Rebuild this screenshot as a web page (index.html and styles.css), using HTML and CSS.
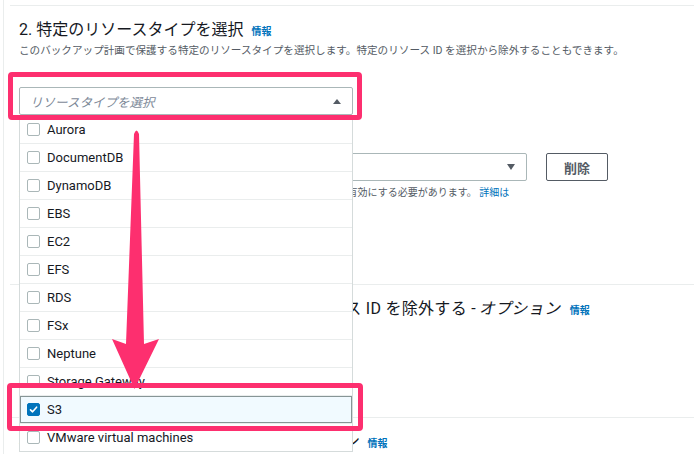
FILE: index.html
```html
<!DOCTYPE html>
<html lang="ja">
<head>
    <meta charset="UTF-8">
    <meta name="viewport" content="width=device-width, initial-scale=1.0">
    <title>リソースの割り当て</title>
    <link rel="stylesheet" href="styles.css">
</head>
<body>
    <div class="page">
        <!-- Section 2 -->
        <section class="panel panel-types">
            <h2 class="title">2. 特定のリソースタイプを選択<a href="#" class="info">情報</a></h2>
            <p class="desc">このバックアップ計画で保護する特定のリソースタイプを選択します。特定のリソース ID を選択から除外することもできます。</p>

            <div class="select-wrap">
                <div class="select">
                    <span class="placeholder">リソースタイプを選択</span>
                    <span class="caret caret-up"></span>
                </div>
                <ul class="menu">
                    <li><span class="check"></span>Aurora</li>
                    <li><span class="check"></span>DocumentDB</li>
                    <li><span class="check"></span>DynamoDB</li>
                    <li><span class="check"></span>EBS</li>
                    <li><span class="check"></span>EC2</li>
                    <li><span class="check"></span>EFS</li>
                    <li><span class="check"></span>RDS</li>
                    <li><span class="check"></span>FSx</li>
                    <li><span class="check"></span>Neptune</li>
                    <li><span class="check"></span>Storage Gateway</li>
                    <li class="selected">
                        <span class="check checked">
                            <svg width="9" height="9" viewBox="0 0 9 9"><polyline points="1.5,4.8 3.6,6.8 7.6,2.2" fill="none" stroke="#fff" stroke-width="1.6" stroke-linecap="round" stroke-linejoin="round"/></svg>
                        </span>S3
                    </li>
                    <li><span class="check"></span>VMware virtual machines</li>
                </ul>
            </div>

            <div class="type-row">
                <div class="type-field">
                    <div class="select">
                        <span class="placeholder"></span>
                        <span class="caret caret-down"></span>
                    </div>
                    <p class="hint">選択したサービスのリソースタイプは、AWS Backup 設定でオプトインを有効にする必要があります。 <a href="#" class="link">詳細は</a></p>
                </div>
                <button class="btn">削除</button>
            </div>
        </section>

        <!-- Section 3 -->
        <section class="panel panel-exclude">
            <h2 class="title title-long">3. 選択したリソースタイプから特定のリソース ID を除外する - <i>オプション</i><a href="#" class="info">情報</a></h2>
        </section>

        <!-- Section 4 -->
        <section class="panel">
            <h2 class="title title-long">4. タグを使用して選択を絞り込む - <i>オプション</i><a href="#" class="info">情報</a></h2>
        </section>
    </div>

    <!-- Annotations -->
    <div class="mark mark-top"></div>
    <div class="mark mark-s3"></div>
    <svg class="arrow" width="694" height="454" viewBox="0 0 694 454">
        <path d="M134,134 Q136.5,127 139,134 L144,344 L159,339 L134.5,389 L112,339 L126,344 Z" fill="#fd2f6f"/>
    </svg>
</body>
</html>
```

FILE: styles.css
```css
* {
    margin: 0;
    padding: 0;
    box-sizing: border-box;
}
body {
    font-family: Roboto, "Noto Sans CJK JP", sans-serif;
    color: #16191f;
    background-color: #fff;
    position: relative;
    width: 694px;
    height: 454px;
    overflow: hidden;
}

.page {
    margin-left: 3px;
    border-left: 1px solid #eaeded;
    padding-top: 5px;
    height: 454px;
}

/* Sections */
.panel {
    margin-left: 6px;
    border-top: 1px solid #eaeded;
    padding: 14px 0 0 9px;
}
.panel-types { padding-bottom: 84px; }
.panel-exclude { padding-bottom: 96px; }

.title {
    font-size: 16px;
    line-height: 20px;
    font-weight: 400;
    white-space: nowrap;
}
.title-long { letter-spacing: 0.3px; }
.title i {
    display: inline-block;
    font-style: normal;
    transform: skewX(-12deg);
}

.info {
    font-size: 10px;
    font-weight: bold;
    color: #0073bb;
    text-decoration: none;
    letter-spacing: 0;
    margin-left: 8px;
}

.desc {
    margin-top: 2px;
    font-size: 10.6px;
    line-height: 14px;
    color: #545b64;
    white-space: nowrap;
}

/* Select */
.select-wrap {
    position: relative;
    width: 334px;
    margin-top: 29px;
}
.select {
    height: 28px;
    border: 1px solid #aab7b8;
    border-radius: 2px;
    background: #fff;
    display: flex;
    align-items: center;
    justify-content: space-between;
    padding: 0 11px 0 10px;
}
.placeholder {
    font-size: 12.5px;
    font-style: italic;
    color: #7d8998;
}
.caret {
    width: 0;
    height: 0;
    border-left: 4px solid transparent;
    border-right: 4px solid transparent;
}
.caret-up { border-bottom: 5px solid #545b64; }
.caret-down { border-top: 6px solid #545b64; border-left-width: 4.5px; border-right-width: 4.5px; }

/* Dropdown list */
.menu {
    list-style: none;
    position: absolute;
    top: 100%;
    left: 0;
    width: 100%;
    background: #fff;
    border: 1px solid #d5dbdb;
    border-top: none;
    z-index: 5;
}
.menu li {
    height: 28px;
    display: flex;
    align-items: center;
    gap: 7px;
    padding-left: 7px;
    font-size: 13px;
    color: #16191f;
}
.menu li + li { border-top: 1px solid #eaeded; }
.menu li.selected {
    background: #f1faff;
    box-shadow: inset 0 0 0 1px #879596;
}

.check {
    width: 13px;
    height: 13px;
    border: 1px solid #aab7b8;
    border-radius: 2px;
    background: #fff;
    display: flex;
    align-items: center;
    justify-content: center;
}
.check.checked {
    background: #0073bb;
    border-color: #0073bb;
}

/* Resource type row */
.type-row {
    display: flex;
    align-items: flex-start;
    gap: 19px;
    margin-top: 38px;
}
.type-field { width: 508px; }
.hint {
    margin-top: 5px;
    font-size: 10px;
    line-height: 14px;
    color: #545b64;
    white-space: nowrap;
}
.link {
    color: #0073bb;
    text-decoration: none;
}
.btn {
    width: 62px;
    height: 28px;
    border: 1px solid #545b64;
    border-radius: 2px;
    background: #fff;
    color: #545b64;
    font-family: Roboto, "Noto Sans CJK JP", sans-serif;
    font-size: 13px;
    font-weight: bold;
}

/* Annotations */
.mark {
    position: absolute;
    border: 5px solid #fd2f6f;
    border-radius: 4px;
    z-index: 10;
}
.mark-top { left: 8px; top: 72px; width: 354px; height: 48px; }
.mark-s3 { left: 7px; top: 383px; width: 356px; height: 48px; }

.arrow {
    position: absolute;
    left: 0;
    top: 0;
    z-index: 11;
    pointer-events: none;
}
```
